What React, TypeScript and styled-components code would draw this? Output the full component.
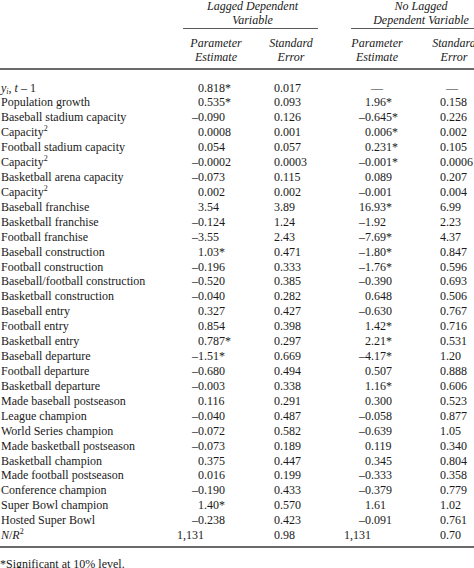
import React from 'react';
import styled, { createGlobalStyle } from 'styled-components';

const GlobalStyle = createGlobalStyle`
    html, body {
        margin: 0;
        padding: 0;
        background: #ffffff;
        overflow: hidden;
    }

    body {
        font-family: 'Liberation Serif', 'Times New Roman', serif;
        font-size: 12px;
        color: #1a1a1a;
    }
`;

const Page = styled.div`
    width: 474px;
    overflow: hidden;
    margin-top: -1px;
`;

const Inner = styled.div`
    width: 500px;
`;

const SpannerRow = styled.div`
    display: flex;
`;

const Spanner = styled.div<{ left: number; width: number; shift?: number }>`
    margin-left: ${({ left }) => left}px;
    width: ${({ width }) => width}px;
    padding-bottom: 1px;
    padding-left: ${({ shift }) => (shift ? shift * 2 : 0)}px;
    box-sizing: border-box;
    border-bottom: 1px solid #5a5a5a;
    font-style: italic;
    line-height: 14px;
    text-align: center;
`;

const SubHead = styled.div`
    display: grid;
    grid-template-columns: 176px 80px 70px 102px 52px;
    margin-top: 7px;
    padding-bottom: 4px;
    border-bottom: 2px solid #6a6a6a;
`;

const SubCell = styled.div`
    font-style: italic;
    line-height: 14px;
    text-align: center;
    white-space: nowrap;
`;

const Body = styled.div`
    padding-top: 10.5px;
    padding-bottom: 3px;
    border-bottom: 2px solid #6a6a6a;
`;

const Row = styled.div`
    display: grid;
    grid-template-columns: 176px 76px 91px 75px 70px;
    height: 14.93px;
    line-height: 14.93px;
    white-space: nowrap;
`;

const Label = styled.div`
    padding-left: 1px;
`;

const Num = styled.div`
    display: flex;
`;

const IntPart = styled.span`
    width: 28px;
    text-align: right;
`;

const FracPart = styled.span`
    text-align: left;
`;

const Plain = styled.div`
    padding-left: 1px;
`;

const Sup = styled.sup`
    font-size: 8px;
    line-height: 0;
    vertical-align: 5px;
`;

const Sub = styled.sub`
    font-size: 8px;
    line-height: 0;
    vertical-align: -2px;
`;

const Em = styled.i``;

const Note = styled.div`
    margin-top: 8.5px;
    line-height: 15px;
`;

type Cell = string;

const Capacity = () => (
    <>
        Capacity<Sup>2</Sup>
    </>
);

const rows: [React.ReactNode, Cell, Cell, Cell, Cell][] = [
    [
        <>
            <Em>y</Em>
            <Sub>
                <Em>i</Em>
            </Sub>
            , <Em>t</Em> – 1
        </>,
        '0.818*',
        '0.017',
        '—',
        '—',
    ],
    ['Population growth', '0.535*', '0.093', '1.96*', '0.158'],
    ['Baseball stadium capacity', '–0.090', '0.126', '–0.645*', '0.226'],
    [<Capacity />, '0.0008', '0.001', '0.006*', '0.002'],
    ['Football stadium capacity', '0.054', '0.057', '0.231*', '0.105'],
    [<Capacity />, '–0.0002', '0.0003', '–0.001*', '0.0006'],
    ['Basketball arena capacity', '–0.073', '0.115', '0.089', '0.207'],
    [<Capacity />, '0.002', '0.002', '–0.001', '0.004'],
    ['Baseball franchise', '3.54', '3.89', '16.93*', '6.99'],
    ['Basketball franchise', '–0.124', '1.24', '–1.92', '2.23'],
    ['Football franchise', '–3.55', '2.43', '–7.69*', '4.37'],
    ['Baseball construction', '1.03*', '0.471', '–1.80*', '0.847'],
    ['Football construction', '–0.196', '0.333', '–1.76*', '0.596'],
    ['Baseball/football construction', '–0.520', '0.385', '–0.390', '0.693'],
    ['Basketball construction', '–0.040', '0.282', '0.648', '0.506'],
    ['Baseball entry', '0.327', '0.427', '–0.630', '0.767'],
    ['Football entry', '0.854', '0.398', '1.42*', '0.716'],
    ['Basketball entry', '0.787*', '0.297', '2.21*', '0.531'],
    ['Baseball departure', '–1.51*', '0.669', '–4.17*', '1.20'],
    ['Football departure', '–0.680', '0.494', '0.507', '0.888'],
    ['Basketball departure', '–0.003', '0.338', '1.16*', '0.606'],
    ['Made baseball postseason', '0.116', '0.291', '0.300', '0.523'],
    ['League champion', '–0.040', '0.487', '–0.058', '0.877'],
    ['World Series champion', '–0.072', '0.582', '–0.639', '1.05'],
    ['Made basketball postseason', '–0.073', '0.189', '0.119', '0.340'],
    ['Basketball champion', '0.375', '0.447', '0.345', '0.804'],
    ['Made football postseason', '0.016', '0.199', '–0.333', '0.358'],
    ['Conference champion', '–0.190', '0.433', '–0.379', '0.779'],
    ['Super Bowl champion', '1.40*', '0.570', '1.61', '1.02'],
    ['Hosted Super Bowl', '–0.238', '0.423', '–0.091', '0.761'],
    [
        <>
            <Em>N</Em>/<Em>R</Em>
            <Sup>2</Sup>
        </>,
        '1,131',
        '0.98',
        '1,131',
        '0.70',
    ],
];

// 소수점 기준 정렬
const Value = ({ value }: { value: Cell }) => {
    if (value.includes(',')) {
        return <Plain>{value}</Plain>;
    }

    const dot = value.indexOf('.');

    if (dot < 0) {
        return (
            <Num>
                <IntPart />
                <FracPart>{value}</FracPart>
            </Num>
        );
    }

    return (
        <Num>
            <IntPart>{value.slice(0, dot)}</IntPart>
            <FracPart>{value.slice(dot)}</FracPart>
        </Num>
    );
};

const App = () => {
    return (
        <>
            <GlobalStyle />
            <Page>
                <Inner>
                    <SpannerRow>
                        <Spanner left={183} width={135} shift={2}>
                            Lagged Dependent
                            <br />
                            Variable
                        </Spanner>
                        <Spanner left={33} width={140} shift={0}>
                            No Lagged
                            <br />
                            Dependent Variable
                        </Spanner>
                    </SpannerRow>
                    <SubHead>
                        <div />
                        <SubCell>
                            Parameter
                            <br />
                            Estimate
                        </SubCell>
                        <SubCell>
                            Standard
                            <br />
                            Error
                        </SubCell>
                        <SubCell>
                            Parameter
                            <br />
                            Estimate
                        </SubCell>
                        <SubCell>
                            Standard
                            <br />
                            Error
                        </SubCell>
                    </SubHead>
                    <Body>
                        {rows.map(([label, a, b, c, d], i) => (
                            <Row key={i}>
                                <Label>{label}</Label>
                                <Value value={a} />
                                <Value value={b} />
                                <Value value={c} />
                                <Value value={d} />
                            </Row>
                        ))}
                    </Body>
                    <Note>*Significant at 10% level.</Note>
                </Inner>
            </Page>
        </>
    );
};

export default App;
